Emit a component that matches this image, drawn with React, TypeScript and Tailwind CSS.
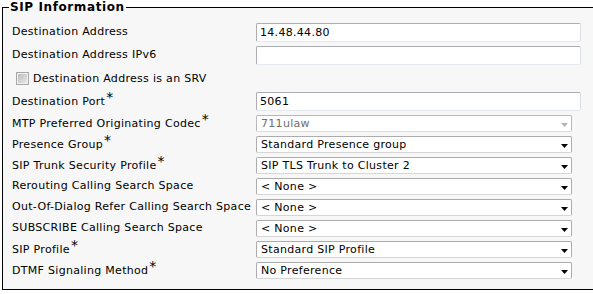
import React from "react";

const Star = () => (
  <span className="relative top-[-3px] ml-[1px] text-[14px] leading-none">*</span>
);

const Label = ({ text, req }: { text: string; req?: boolean }) => (
  <div className="w-[244px] shrink-0 whitespace-nowrap leading-[13px] relative top-[-1px]">
    {text}
    {req && <Star />}
  </div>
);

const TextBox = ({ value }: { value: string }) => (
  <div className="w-[325px] h-[19px] bg-white border border-[#abadb3] border-r-[#dbdfe6] border-b-[#e3e9ef] rounded-[2px] flex items-center pl-[3px] leading-none">
    {value}
  </div>
);

const Arrow = ({ color }: { color: string }) => (
  <svg width="7" height="4" viewBox="0 0 7 4" className="shrink-0 mt-[2px]">
    <polygon points="0,0 7,0 3.5,4" fill={color} />
  </svg>
);

const Select = ({ value, disabled }: { value: string; disabled?: boolean }) => (
  <div
    className={
      disabled
        ? "w-[316px] h-[17px] bg-white border border-[#b8b8b8] border-b-[#dcdcdc] rounded-[2px] flex items-center justify-between pl-[4px] pr-[3px] leading-none text-[#6d6d6d]"
        : "w-[316px] h-[17px] bg-white border border-[#acacac] border-b-[#d6d6d6] rounded-[2px] flex items-center justify-between pl-[4px] pr-[3px] leading-none"
    }
  >
    <span className="whitespace-nowrap">{value}</span>
    <Arrow color={disabled ? "#b4b4b4" : "#000000"} />
  </div>
);

const selects: { label: string; req: boolean; value: string; disabled?: boolean }[] = [
  { label: "MTP Preferred Originating Codec", req: true, value: "711ulaw", disabled: true },
  { label: "Presence Group", req: true, value: "Standard Presence group" },
  { label: "SIP Trunk Security Profile", req: true, value: "SIP TLS Trunk to Cluster 2" },
  { label: "Rerouting Calling Search Space", req: false, value: "< None >" },
  { label: "Out-Of-Dialog Refer Calling Search Space", req: false, value: "< None >" },
  { label: "SUBSCRIBE Calling Search Space", req: false, value: "< None >" },
  { label: "SIP Profile", req: true, value: "Standard SIP Profile" },
  { label: "DTMF Signaling Method", req: true, value: "No Preference" },
];

export default function App() {
  return (
    <div className="w-[593px] h-[294px] bg-white font-['DejaVu_Sans',sans-serif] text-[11px] tracking-[0.3px] text-black overflow-hidden">
      <fieldset className="ml-[2px] border-t border-l border-b border-black bg-[#f7f7f7] pl-[6px] pt-[8px] pb-[10px] min-w-0">
        <legend className="px-[1px] font-bold text-[12px] tracking-[0.6px] leading-[15px]">SIP Information</legend>
        <div className="flex flex-col pl-[3px]">
          <div className="flex items-center">
            <Label text="Destination Address" />
            <TextBox value="14.48.44.80" />
          </div>
          <div className="flex items-center mt-[4px]">
            <Label text="Destination Address IPv6" />
            <TextBox value="" />
          </div>
          <div className="flex items-center h-[27px]">
            <div className="ml-[4px] w-[13px] h-[13px] border border-[#a8a8a8] bg-[#f0f0f0] flex items-center justify-center">
              <div className="w-[9px] h-[9px] bg-gradient-to-br from-[#bdbdbd] to-[#e8e8e8]" />
            </div>
            <span className="ml-[4px] whitespace-nowrap leading-[13px]">Destination Address is an SRV</span>
          </div>
          <div className="flex items-center">
            <Label text="Destination Port" req />
            <TextBox value="5061" />
          </div>
          {selects.map((s) => (
            <div key={s.label} className="flex items-center mt-[4px]">
              <Label text={s.label} req={s.req} />
              <Select value={s.value} disabled={s.disabled} />
            </div>
          ))}
        </div>
      </fieldset>
    </div>
  );
}
